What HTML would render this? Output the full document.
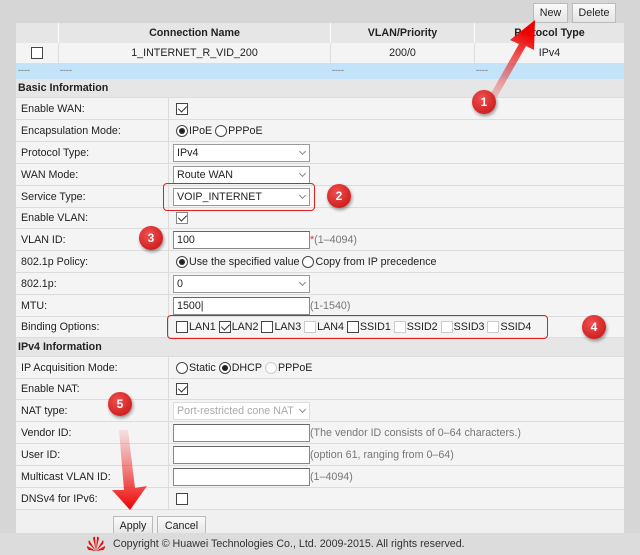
<!DOCTYPE html>
<html><head><style>
*{margin:0;padding:0;box-sizing:border-box}
body{width:640px;height:555px;background:#d6d6d6;font-family:"Liberation Sans",sans-serif;font-size:10.7px;color:#222;position:relative;overflow:hidden}
.a{position:absolute}
.row{position:absolute;left:16px;width:608px;background:#f4f4f4;border-bottom:1px solid #dcdcdc}
.row .l{position:absolute;left:5px;top:0;bottom:0;display:flex;align-items:center}
.row .sep{position:absolute;left:152px;top:0;bottom:0;border-left:1px solid #dcdcdc}
.row .v{position:absolute;left:160px;top:0;bottom:0;display:flex;align-items:center;white-space:nowrap}
.h{position:absolute;left:16px;width:608px;background:#e6e6e6;font-weight:bold;padding-left:2px;display:flex;align-items:center;border-bottom:1px solid #dcdcdc}
.cb{display:inline-block;width:12px;height:12px;border:1px solid #444;background:#fff;margin-right:1px;position:relative;vertical-align:middle}
.cb.d{border-color:#ccc}
.cb.c::after{content:"";position:absolute;left:3px;top:0px;width:4px;height:7px;border:solid #333;border-width:0 1.5px 1.5px 0;transform:rotate(45deg)}
.rd{display:inline-block;width:12px;height:12px;border:1px solid #444;border-radius:50%;background:#fff;margin-right:1px;position:relative;vertical-align:middle}
.rd.d{border-color:#ccc}
.rd.c::after{content:"";position:absolute;left:2px;top:2px;width:6px;height:6px;border-radius:50%;background:#222}
.sel,.inp{height:18px;border:1px solid #999;background:#fff;display:flex;align-items:center;padding-left:3px;position:relative;width:137px}
.inp{border-color:#888;border-top-color:#666}
.sel::after{content:"";position:absolute;right:4px;top:4px;width:4px;height:4px;border:solid #888;border-width:0 1px 1px 0;transform:rotate(45deg)}
.g{color:#777}
.btn{position:absolute;height:20px;background:linear-gradient(#fafafa,#e4e4e4);border:1px solid #bbb;display:flex;align-items:center;justify-content:center}
.bad{position:absolute;width:24px;height:24px;border-radius:50%;background:radial-gradient(circle at 40% 35%,#f05050,#c40e0e);color:#fff;font-weight:bold;font-size:12px;display:flex;align-items:center;justify-content:center;box-shadow:1px 2px 3px rgba(0,0,0,.4)}
.rb{position:absolute;border:1.5px solid #e02020;border-radius:4px}
</style></head><body>
<div class="btn" style="left:533px;top:3px;width:35px">New</div>
<div class="btn" style="left:572px;top:3px;width:44px">Delete</div>
<div class="a" style="left:16px;top:23px;width:608px;height:20px;background:#e6e6e6;font-weight:bold"></div>
<div class="a" style="left:58px;top:23px;width:272px;height:20px;display:flex;align-items:center;justify-content:center;font-weight:bold;border-left:1px solid #fff">Connection Name</div>
<div class="a" style="left:330px;top:23px;width:144px;height:20px;display:flex;align-items:center;justify-content:center;font-weight:bold;border-left:1px solid #fff">VLAN/Priority</div>
<div class="a" style="left:474px;top:23px;width:150px;height:20px;display:flex;align-items:center;justify-content:center;font-weight:bold;border-left:1px solid #fff">Protocol Type</div>
<div class="a" style="left:16px;top:43px;width:608px;height:20px;background:#f4f4f4"></div>
<div class="a" style="left:31px;top:47px"><span class="cb"></span></div>
<div class="a" style="left:58px;top:43px;width:272px;height:20px;display:flex;align-items:center;justify-content:center;border-left:1px solid #ddd">1_INTERNET_R_VID_200</div>
<div class="a" style="left:330px;top:43px;width:144px;height:20px;display:flex;align-items:center;justify-content:center;border-left:1px solid #ddd">200/0</div>
<div class="a" style="left:474px;top:43px;width:150px;height:20px;display:flex;align-items:center;justify-content:center;border-left:1px solid #ddd">IPv4</div>
<div class="a" style="left:16px;top:63px;width:608px;height:16px;background:#c3e3f8;font-size:9px;color:#666"><span class="a" style="left:2px;top:2px">----</span><span class="a" style="left:44px;top:2px">----</span><span class="a" style="left:316px;top:2px">----</span><span class="a" style="left:460px;top:2px">----</span></div>
<div class="h" style="top:79px;height:19px">Basic Information</div>
<div class="row" style="top:98px;height:22px"><div class="l">Enable WAN:</div><div class="sep"></div><div class="v"><span class="cb c"></span></div></div>
<div class="row" style="top:120px;height:22px"><div class="l">Encapsulation Mode:</div><div class="sep"></div><div class="v"><span class="rd c"></span>IPoE&nbsp;<span class="rd"></span>PPPoE</div></div>
<div class="row" style="top:142px;height:22px"><div class="l">Protocol Type:</div><div class="sep"></div><div class="v" style="left:157px"><div class="sel">IPv4</div></div></div>
<div class="row" style="top:164px;height:22px"><div class="l">WAN Mode:</div><div class="sep"></div><div class="v" style="left:157px"><div class="sel">Route WAN</div></div></div>
<div class="row" style="top:186px;height:22px"><div class="l">Service Type:</div><div class="sep"></div><div class="v" style="left:157px"><div class="sel">VOIP_INTERNET</div></div></div>
<div class="row" style="top:208px;height:21px"><div class="l">Enable VLAN:</div><div class="sep"></div><div class="v"><span class="cb c" style="border-color:#888"></span></div></div>
<div class="row" style="top:229px;height:22px"><div class="l">VLAN ID:</div><div class="sep"></div><div class="v" style="left:157px"><div class="inp">100</div><span style="color:#e33">*</span><span class="g">(1–4094)</span></div></div>
<div class="row" style="top:251px;height:22px"><div class="l">802.1p Policy:</div><div class="sep"></div><div class="v"><span class="rd c"></span>Use the specified value&nbsp;<span class="rd"></span>Copy from IP precedence</div></div>
<div class="row" style="top:273px;height:22px"><div class="l">802.1p:</div><div class="sep"></div><div class="v" style="left:157px"><div class="sel">0</div></div></div>
<div class="row" style="top:295px;height:22px"><div class="l">MTU:</div><div class="sep"></div><div class="v" style="left:157px"><div class="inp">1500|</div><span class="g">(1-1540)</span></div></div>
<div class="row" style="top:317px;height:21px"><div class="l">Binding Options:</div><div class="sep"></div><div class="v"><span class="cb"></span>LAN1&nbsp;<span class="cb c"></span>LAN2&nbsp;<span class="cb"></span>LAN3&nbsp;<span class="cb d"></span>LAN4&nbsp;<span class="cb"></span>SSID1&nbsp;<span class="cb d"></span>SSID2&nbsp;<span class="cb d"></span>SSID3&nbsp;<span class="cb d"></span>SSID4</div></div>
<div class="h" style="top:338px;height:19px">IPv4 Information</div>
<div class="row" style="top:357px;height:22px"><div class="l">IP Acquisition Mode:</div><div class="sep"></div><div class="v"><span class="rd"></span>Static&nbsp;<span class="rd c"></span>DHCP&nbsp;<span class="rd d"></span>PPPoE</div></div>
<div class="row" style="top:379px;height:21px"><div class="l">Enable NAT:</div><div class="sep"></div><div class="v"><span class="cb c"></span></div></div>
<div class="row" style="top:400px;height:22px"><div class="l">NAT type:</div><div class="sep"></div><div class="v" style="left:157px"><div class="sel" style="color:#aaa;border-color:#ddd">Port-restricted cone NAT</div></div></div>
<div class="row" style="top:422px;height:22px"><div class="l">Vendor ID:</div><div class="sep"></div><div class="v" style="left:157px"><div class="inp"></div><span class="g">(The vendor ID consists of 0–64 characters.)</span></div></div>
<div class="row" style="top:444px;height:22px"><div class="l">User ID:</div><div class="sep"></div><div class="v" style="left:157px"><div class="inp"></div><span class="g">(option 61, ranging from 0–64)</span></div></div>
<div class="row" style="top:466px;height:22px"><div class="l">Multicast VLAN ID:</div><div class="sep"></div><div class="v" style="left:157px"><div class="inp"></div><span class="g">(1–4094)</span></div></div>
<div class="row" style="top:488px;height:22px"><div class="l">DNSv4 for IPv6:</div><div class="sep"></div><div class="v"><span class="cb"></span></div></div>
<div class="a" style="left:16px;top:510px;width:608px;height:23px;background:#f0f0f0"></div>
<div class="btn" style="left:113px;top:516px;width:40px">Apply</div>
<div class="btn" style="left:157px;top:516px;width:49px">Cancel</div>
<div class="a" style="left:0;top:533px;width:640px;height:22px;background:#dcdcdc"></div>
<svg class="a" style="left:86px;top:536px" width="20" height="16" viewBox="0 0 20 16"><g fill="#e01010"><path d="M10 15 L7 2 Q8 0 9 1Z"/><path d="M10 15 L13 2 Q12 0 11 1Z"/><path d="M10 15 L3 4 Q2 6 3 8Z"/><path d="M10 15 L17 4 Q18 6 17 8Z"/><path d="M10 15 L1 10 Q1 13 3 14Z"/><path d="M10 15 L19 10 Q19 13 17 14Z"/></g></svg>
<div class="a" style="left:113px;top:538px;color:#333">Copyright © Huawei Technologies Co., Ltd. 2009-2015. All rights reserved.</div>
<div class="rb" style="left:163px;top:183px;width:152px;height:28px"></div>
<div class="rb" style="left:167px;top:315px;width:381px;height:24px"></div>
<svg class="a" style="left:0;top:0" width="640" height="555">
<defs><linearGradient id="g1" x1="0" y1="1" x2="0.3" y2="0"><stop offset="0" stop-color="#e33" stop-opacity=".2"/><stop offset="1" stop-color="#e00"/></linearGradient>
<linearGradient id="g2" x1="0" y1="0" x2="0" y2="1"><stop offset="0" stop-color="#e33" stop-opacity=".1"/><stop offset="1" stop-color="#e00"/></linearGradient></defs>
<path d="M490 95 L519 44 L510 40 L535 20 L534 50 L526 46 L497 97Z" fill="url(#g1)"/>
<path d="M119 430 L128 430 L135 488 L147 486 L130 510 L112 490 L124 490Z" fill="url(#g2)"/>
</svg>
<div class="bad" style="left:472px;top:90px">1</div>
<div class="bad" style="left:327px;top:184px">2</div>
<div class="bad" style="left:139px;top:226px">3</div>
<div class="bad" style="left:582px;top:315px">4</div>
<div class="bad" style="left:108px;top:392px">5</div>
</body></html>
